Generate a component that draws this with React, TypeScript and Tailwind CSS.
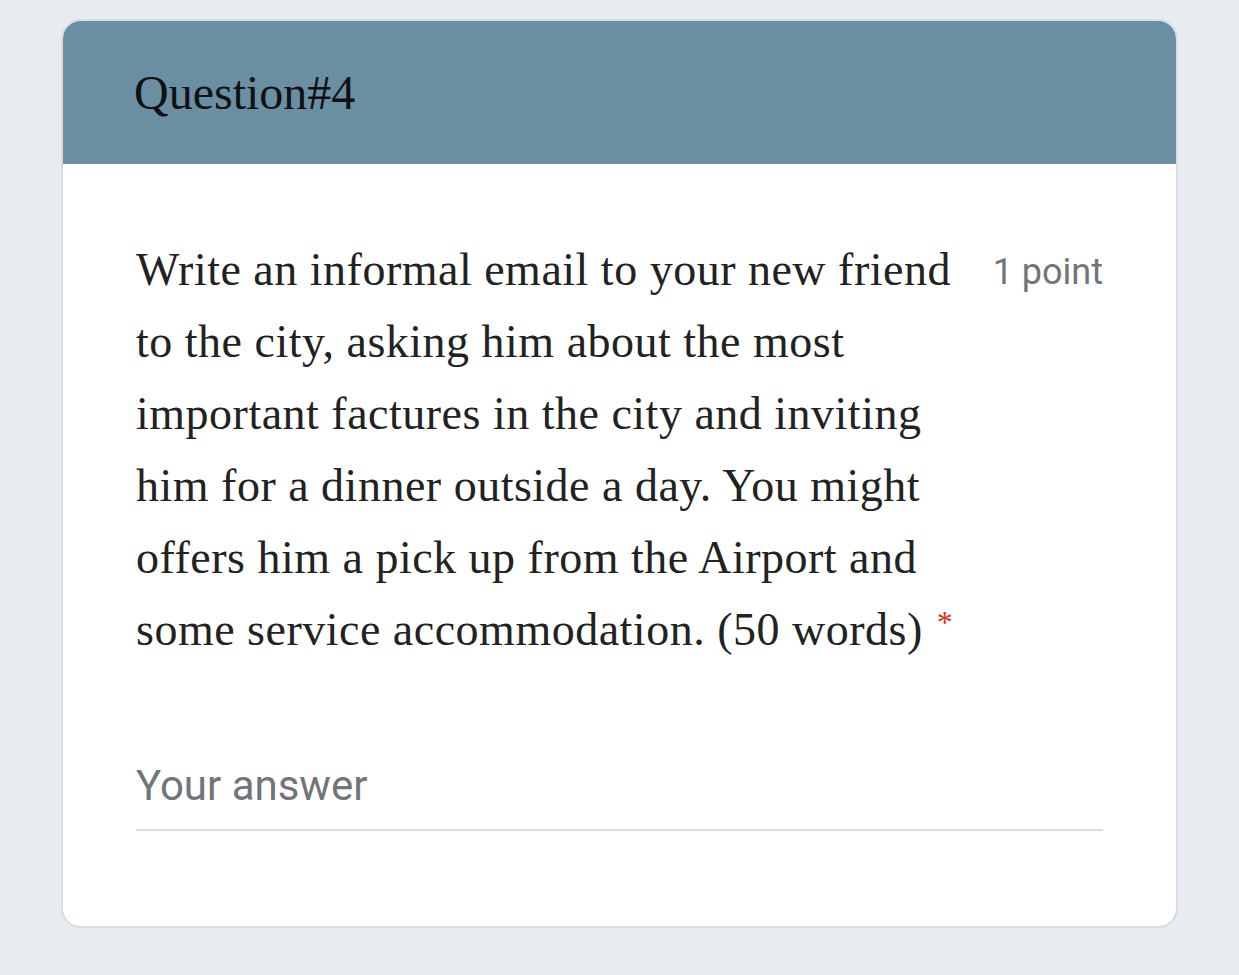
const lines = [
  "Write an informal email to your new friend",
  "to the city, asking him about the most",
  "important factures in the city and inviting",
  "him for a dinner outside a day. You might",
  "offers him a pick up from the Airport and",
];

const App = () => {
  return (
    <div className="min-h-[975px] w-full bg-[#e8ecf1] pt-[19px] pl-[61px] pr-[61px]">
      <div className="w-[1117px] rounded-[20px] border-2 border-[#dadce0] bg-white overflow-hidden">
        <div className="h-[143px] bg-[#6a8fa2] pl-[71px] pt-[44px]">
          <h1 className="text-[48px] leading-[56px] text-[#111] font-['Liberation_Serif',serif]">
            Question#4
          </h1>
        </div>

        <div className="px-[73px] pt-[70px] pb-[95px]">
          <div className="flex items-start justify-between">
            <div className="text-[46px] leading-[72px] tracking-[0.5px] text-[#222] font-['Liberation_Serif',serif]">
              {lines.map((line) => (
                <div key={line}>{line}</div>
              ))}
              <div>
                some service accommodation. (50 words)
                <span className="ml-[14px] align-top text-[32px] leading-[56px] text-[#d93025]">*</span>
              </div>
            </div>
            <span className="mt-[18px] text-[36px] leading-[40px] text-[#70757a] font-['Roboto',sans-serif] whitespace-nowrap">
              1 point
            </span>
          </div>

          <div className="mt-[95px] border-b-2 border-[#dadce0] pb-[18px]">
            <span className="text-[42px] leading-[50px] text-[#70757a] font-['Roboto',sans-serif]">
              Your answer
            </span>
          </div>
        </div>
      </div>
    </div>
  );
};

export default App;
